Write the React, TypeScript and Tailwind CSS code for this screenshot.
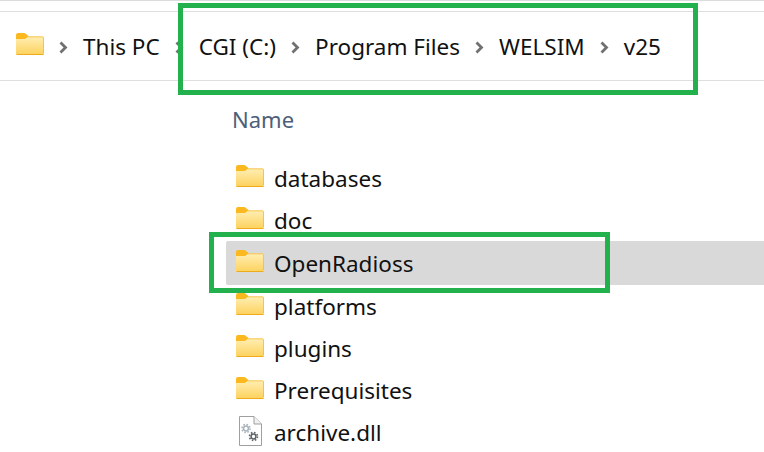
const crumbs = ['This PC', 'CGI (C:)', 'Program Files', 'WELSIM', 'v25']
const rows = ['databases', 'doc', 'OpenRadioss', 'platforms', 'plugins', 'Prerequisites']

function FolderIcon() {
  return (
    <svg viewBox="0 0 28 22" className="mb-[4px] h-[22px] w-7 shrink-0">
      <defs>
        <linearGradient id="folderFill" x1="0" y1="0" x2="0" y2="1">
          <stop offset="0" stopColor="#ffeeb4" />
          <stop offset="1" stopColor="#fdd25c" />
        </linearGradient>
      </defs>
      <path d="M0 2 Q0 0 2 0 H8 Q9 0 10 1 L13 3.500 L9 6 H0 Z" fill="#fbb81f" />
      <path d="M0 6 H9.500 L12.500 3.500 H26.500 Q28 3.500 28 5 V20.500 Q28 22 26.500 22 H1.500 Q0 22 0 20.500 Z" fill="url(#folderFill)" />
      <path d="M.2 21 H27.800 Q27.500 22 26.500 22 H1.500 Q.5 22 .2 21 Z" fill="#eeac1c" />
      <path d="M12.500 3.500 H26.500 Q28 3.500 28 5 V20 H27.300 V4.300 H12 Z" fill="#f4b62a" />
    </svg>
  )
}

function Chevron() {
  return (
    <svg viewBox="0 0 9 13" className="mt-[2px] h-[13px] w-[9px] shrink-0">
      <path d="M1.500 1.500 L6.500 6.500 L1.500 11.500" fill="none" stroke="#707070" strokeWidth="2.800" />
    </svg>
  )
}

function Gear({ x, y, color }: { x: number; y: number; color: string }) {
  return (
    <g>
      <circle cx={x} cy={y} r="4" fill="none" stroke={color} strokeWidth="1.600" strokeDasharray="1.570 1.570" />
      <circle cx={x} cy={y} r="2.400" fill="#fff" stroke={color} strokeWidth="1.500" />
    </g>
  )
}

function DllIcon() {
  return (
    <svg viewBox="0 0 23 30" className="mb-[3px] h-[30px] w-[23px] shrink-0">
      <path d="M.5 .5 H15 L22.500 8 V29.500 H.5 Z" fill="#fff" stroke="#9f9f9f" />
      <path d="M15 .5 V8 H22.500" fill="#f0f0f0" stroke="#9f9f9f" />
      <Gear x={7} y={12.500} color="#a9b4bd" />
      <Gear x={14.500} y={20.500} color="#5f6468" />
    </svg>
  )
}

export default function App() {
  return (
    <div className="relative h-[452px] w-[764px] overflow-hidden bg-white font-['Noto_Sans','Open_Sans',sans-serif] text-[22.500px] text-[#111]">
      <div className="h-[11px] border-t border-[#dcdcdc]" />
      <div className="flex h-[70px] items-center border-y border-[#dedede] pl-4">
        <FolderIcon />
        <div className="ml-[15px] flex items-center gap-[15px]">
          {crumbs.map((c) => (
            <div key={c} className="flex items-center gap-[15px]">
              <Chevron />
              <span className="mt-[3px] leading-none">{c}</span>
            </div>
          ))}
        </div>
      </div>
      <div className="pl-[232px] pt-[21px] text-[22px] leading-[34px] text-[#4c607a]">Name</div>
      <div className="mt-[21px] pl-[226px]">
        {rows.map((r) => (
          <div
            key={r}
            className={
              r === 'OpenRadioss'
                ? 'flex h-[44px] items-center rounded-l-[2px] bg-[#d9d9d9] pl-[10px]'
                : 'flex h-[42px] items-center pl-[10px]'
            }
          >
            <FolderIcon />
            <span className="ml-[10px] mt-[3px] leading-none">{r}</span>
          </div>
        ))}
        <div className="flex h-[42px] items-center pl-[13px]">
          <DllIcon />
          <span className="ml-[12px] mt-[3px] leading-none">archive.dll</span>
        </div>
      </div>
      <div className="absolute left-[178px] top-[3px] h-[92px] w-[520px] border-[5px] border-[#22b14c]" />
      <div className="absolute left-[209px] top-[232px] h-[61px] w-[401px] border-[5px] border-[#22b14c]" />
    </div>
  )
}
